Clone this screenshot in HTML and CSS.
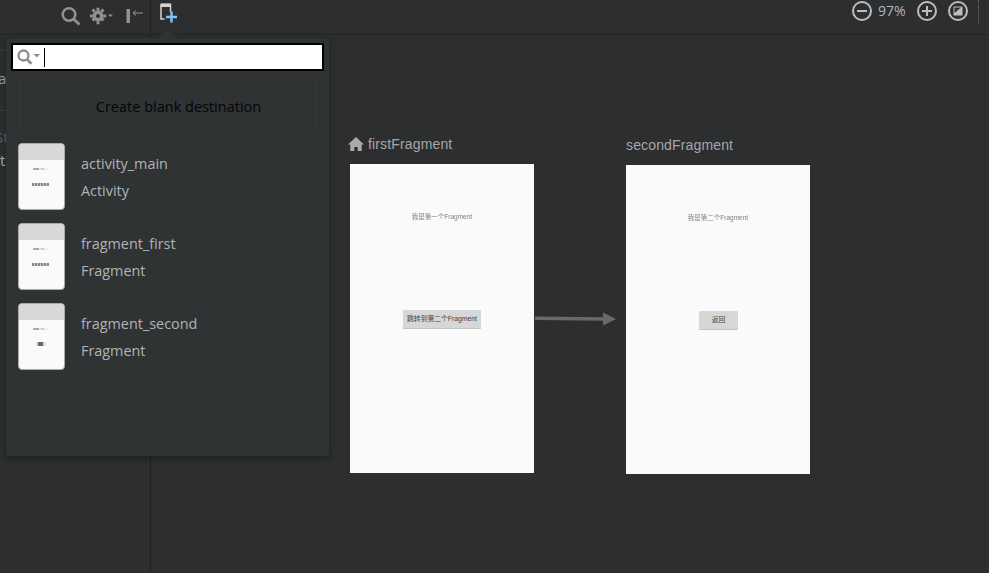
FILE: index.html
```html
<!DOCTYPE html>
<html lang="en">
<head>
<meta charset="utf-8">
<title>Navigation editor</title>
<link rel="stylesheet" href="styles.css">
</head>
<body>
<div class="app">
  <aside class="side">
    <div class="side-tools">
      <svg class="ic-search" viewBox="0 0 20 20"><circle cx="8" cy="8.500" r="6.300" fill="none" stroke="#8f9192" stroke-width="2.600"/><path d="M12.500 13l6 5.500" stroke="#8f9192" stroke-width="3"/></svg>
      <svg class="ic-gear" viewBox="0 0 24 18"><g fill="#8f9192"><circle cx="8" cy="9" r="5.400"/><path d="M6.500 0.800h3v3h-3zM6.500 14.200h3v3h-3zM-0.200 7.500h3v3h-3zM13.200 7.500h3v3h-3zM1.500 3.600l2.100-2.100 2.100 2.100-2.100 2.100zM10.300 12.400l2.100-2.100 2.100 2.100-2.100 2.100zM10.300 3.600l2.100-2.100 2.100 2.100-2.100 2.100zM1.500 12.400l2.100-2.100 2.100 2.100-2.100 2.100z"/><path d="M18 7.500h5l-2.500 2.600z"/></g><circle cx="8" cy="9" r="2" fill="#2c2e2f"/></svg>
      <svg class="ic-collapse" viewBox="0 0 18 16"><rect x="0.500" y="1" width="3.500" height="14" fill="#8f9192"/><path d="M7 5h10M7 5l3-2.500M7 5l3 2.500" stroke="#8f9192" stroke-width="1" fill="none"/></svg>
    </div>
    <div class="side-body">
      <div class="side-rule side-rule-top"></div>
      <div class="side-rule side-row-a"><span class="clip-a">a</span></div>
      <div class="side-st">St</div>
      <div class="side-t">t</div>
    </div>
  </aside>
  <main class="main">
    <header class="bar">
      <svg class="ic-new" viewBox="0 0 18 20"><path d="M1 1.500h9.500v7.500M1 1.500v14.500h3.500" fill="none" stroke="#d2d3d4" stroke-width="1.500"/><rect x="0.500" y="0.500" width="10.500" height="3.500" fill="#d2d3d4"/><path d="M11.500 8.500v11M6 14h11" stroke="#7cc4f5" stroke-width="2.500"/></svg>
      <div class="zoom">
        <svg class="ic-zoom" viewBox="0 0 20 20"><circle cx="10" cy="10" r="9" fill="none" stroke="#bcbdbe" stroke-width="2"/><path d="M5 10h10" stroke="#bcbdbe" stroke-width="2"/></svg>
        <span class="pct">97%</span>
        <svg class="ic-zoom" viewBox="0 0 20 20"><circle cx="10" cy="10" r="9" fill="none" stroke="#bcbdbe" stroke-width="2"/><path d="M5 10h10M10 5v10" stroke="#bcbdbe" stroke-width="2"/></svg>
        <svg class="ic-zoom ic-fit" viewBox="0 0 20 20"><circle cx="10" cy="10" r="9" fill="none" stroke="#bcbdbe" stroke-width="2"/><rect x="5.500" y="5.500" width="9" height="9" fill="#bcbdbe"/><path d="M6.500 6.500h6.500l-6.500 5.500z" fill="#333435"/></svg>
        <span class="dots"></span>
      </div>
    </header>
    <section class="canvas">
      <div class="node node-first">
        <div class="node-title"><svg class="ic-home" viewBox="0 0 16 14"><path d="M8 0L0 7.500h2.300V14h4v-4h3.400v4h4V7.500H16z" fill="#a9aaab"/></svg>firstFragment</div>
        <div class="phone">
          <p class="tv">我是第一个Fragment</p>
          <div class="btn btn-wide">跳转到第二个Fragment</div>
        </div>
      </div>
      <svg class="arrow" viewBox="0 0 81 14"><path d="M0 6.200L69 7" stroke="#67696a" stroke-width="3.400"/><path d="M68 0.500L81 7L68 13.500z" fill="#67696a"/></svg>
      <div class="node node-second">
        <div class="node-title">secondFragment</div>
        <div class="phone">
          <p class="tv">我是第二个Fragment</p>
          <div class="btn btn-short">返回</div>
        </div>
      </div>
    </section>
  </main>
</div>

<div class="popup">
  <div class="search">
    <svg class="ic-s2" viewBox="0 0 24 16"><circle cx="6.500" cy="6.500" r="5" fill="none" stroke="#8c8c8c" stroke-width="2.300"/><path d="M10 10.500l4.500 4.200" stroke="#8c8c8c" stroke-width="2.600"/><path d="M16.500 5h6.500l-3.250 3.500z" fill="#8c8c8c"/></svg>
    <span class="caret"></span>
  </div>
  <div class="blank">Create blank destination</div>
  <ul class="dest-list">
    <li class="dest">
      <div class="thumb"><div class="thumb-head"></div><i class="mini-a"></i><i class="mini-b"></i></div>
      <div class="dest-text"><span>activity_main</span><span>Activity</span></div>
    </li>
    <li class="dest">
      <div class="thumb"><div class="thumb-head"></div><i class="mini-a"></i><i class="mini-b"></i></div>
      <div class="dest-text"><span>fragment_first</span><span>Fragment</span></div>
    </li>
    <li class="dest">
      <div class="thumb"><div class="thumb-head"></div><i class="mini-a"></i><i class="mini-c"></i></div>
      <div class="dest-text"><span>fragment_second</span><span>Fragment</span></div>
    </li>
  </ul>
</div>
</body>
</html>
```
FILE: styles.css
```css
* { box-sizing: border-box; }
html, body { margin: 0; height: 100%; overflow: hidden; }
body { background: #2d2e30; font-family: "Open Sans", "Noto Sans CJK SC", sans-serif; }

.app { display: flex; height: 573px; }

.side { width: 151px; flex: none; background: #2c2e2f; border-right: 1px solid #1f2021; display: flex; flex-direction: column; overflow: hidden; }
.side-tools { height: 35px; flex: none; border-bottom: 1px solid #232425; display: flex; align-items: center; padding: 0 0 2px 61px; }
.ic-search { width: 20px; height: 20px; margin-right: 9px; }
.ic-gear { width: 24px; height: 18px; margin-right: 12px; }
.ic-collapse { width: 18px; height: 16px; }
.side-body { color: #a9abac; font-size: 15px; line-height: 20px; }
.side-rule { border-bottom: 1px solid #3c3e3f; }
.side-rule-top { height: 16px; }
.side-row-a { height: 60px; display: flex; align-items: center; padding-bottom: 5px; }
.clip-a { margin-left: -2px; color: #8fa2ad; }
.side-st { margin: 16px 0 0 -5px; color: #56626a; }
.side-t { margin-top: 3px; color: #a9abac; }

.main { flex: 1; display: flex; flex-direction: column; min-width: 0; }
.bar { height: 35px; flex: none; border-bottom: 1px solid #232425; display: flex; justify-content: space-between; align-items: flex-start; padding: 3px 10px 0 9px; }
.ic-new { width: 18px; height: 20px; }
.zoom { display: flex; align-items: flex-start; margin-top: -2px; }
.ic-zoom { width: 20px; height: 20px; margin-left: 11px; }
.pct { color: #b4b6b7; font-size: 14px; line-height: 20px; width: 28px; margin-left: 6px; white-space: nowrap; }
.zoom > .ic-zoom:first-child { margin-left: 0; }
.dots { width: 1px; height: 24px; margin: -1px 0 0 10px; border-left: 1px dotted #6b6d6e; }

.canvas { flex: 1; position: relative; }
.node { position: absolute; width: 184px; }
.node-first { left: 199px; top: 99px; }
.node-second { left: 475px; top: 100px; }
.node-title { height: 30px; color: #a6a7a8; font-family: "Liberation Sans", sans-serif; font-size: 14px; letter-spacing: 0.15px; display: flex; align-items: center; gap: 4px; padding-bottom: 10px; }
.node-first .node-title { margin-left: -2px; }
.ic-home { width: 16px; height: 14px; }
.phone { height: 309px; background: #fafafa; position: relative; display: flex; flex-direction: column; align-items: center; }
.tv { margin: 48px 0 0; font-size: 6.500px; line-height: 10px; color: #808080; font-family: "Liberation Sans", "Noto Sans CJK SC", sans-serif; white-space: nowrap; filter: blur(0.25px); }
.btn { position: absolute; top: 146px; height: 17.500px; border-radius: 1px; background: #d6d7d7; color: #444; font-size: 6.800px; line-height: 17px; text-align: center; white-space: nowrap; font-family: "Liberation Sans", "Noto Sans CJK SC", sans-serif; box-shadow: 0 1px 0 #c2c2c2; }
.btn-wide { left: 53px; width: 78px; }
.btn-short { left: 73px; width: 39px; }
.arrow { position: absolute; left: 384px; top: 277px; width: 81px; height: 14px; }

.popup { position: absolute; left: 6px; top: 38px; width: 323px; height: 418px; background: #2f3334; border-radius: 4px; box-shadow: 0 2px 7px rgba(0,0,0,.35); padding: 5px 5px 0; }
.popup::before { content: ""; position: absolute; left: 151px; top: -9px; border: 10px solid transparent; border-top: 0; border-bottom-color: #2f3334; }
.search { height: 28px; background: #fff; border: 2px solid #000; display: flex; align-items: center; padding-left: 4px; }
.ic-s2 { width: 24px; height: 16px; margin-right: 3px; }
.caret { width: 1px; height: 19px; background: #000; }
.blank { margin: 7px 8px 0; height: 56px; border: 1px dotted #383c3d; color: #050506; font-size: 14.500px; display: flex; align-items: center; justify-content: center; padding-left: 22px; }
.dest-list { list-style: none; margin: 9px 0 0; padding: 0 0 0 7px; }
.dest { height: 80px; display: flex; gap: 16px; }
.thumb { width: 47px; height: 67px; background: #fafafa; border: 1px solid #a8aaab; border-radius: 4px; overflow: hidden; position: relative; flex: none; }
.thumb-head { height: 16px; background: #d8d8d8; }
.thumb i { position: absolute; display: block; filter: blur(0.3px); }
.mini-a { left: 14px; top: 24px; width: 15px; height: 1.500px; background: linear-gradient(90deg,#aaa 0 40%,#e4e4e4 40% 55%,#ccc 55% 75%,#eee 75% 100%); }
.mini-b { left: 13px; top: 39px; width: 17px; height: 3px; background: repeating-linear-gradient(90deg,#888 0 2px,#c8c8c8 2px 3px); }
.mini-c { left: 17px; top: 38px; width: 10px; height: 4px; background: linear-gradient(90deg,#ddd 0 25%,#666 25% 70%,#ddd 70% 100%); }
.dest-text { display: flex; flex-direction: column; color: #b1b3b4; font-size: 14.400px; line-height: 27px; padding-top: 7px; white-space: nowrap; }
```
